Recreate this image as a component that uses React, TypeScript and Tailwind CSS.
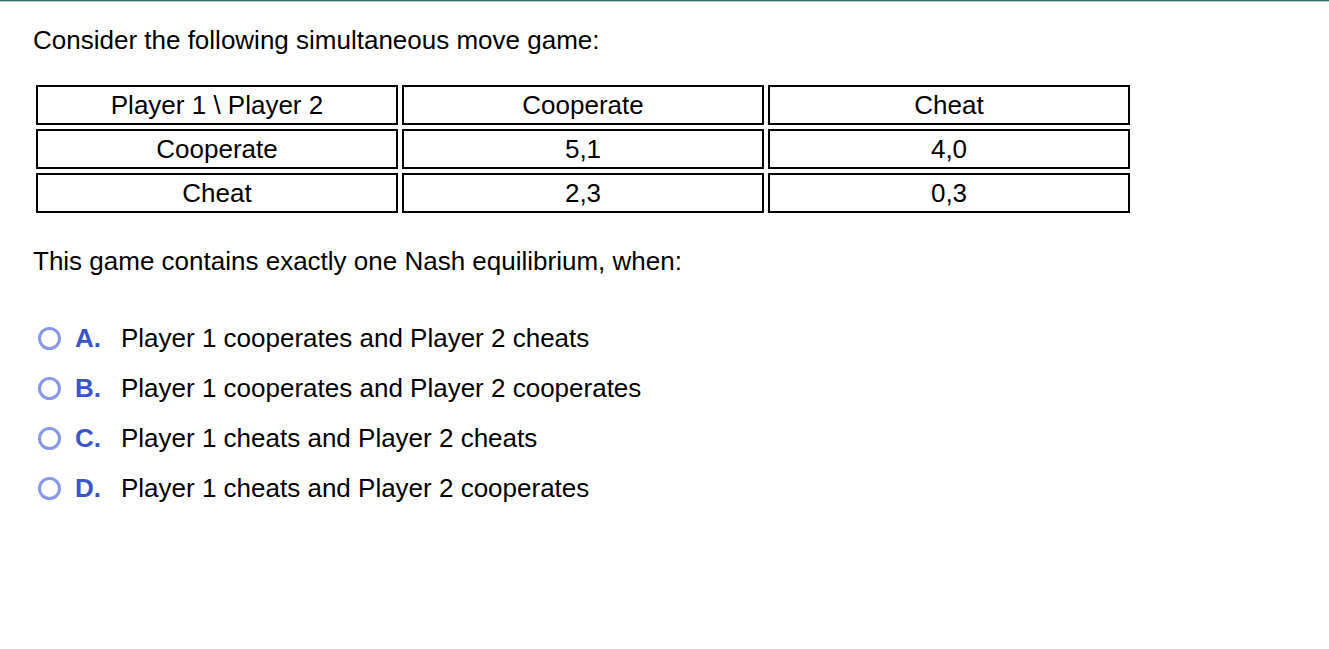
import React from "react";

const rows = [
  ["Player 1 \\ Player 2", "Cooperate", "Cheat"],
  ["Cooperate", "5,1", "4,0"],
  ["Cheat", "2,3", "0,3"],
];

const options = [
  ["A.", "Player 1 cooperates and Player 2 cheats"],
  ["B.", "Player 1 cooperates and Player 2 cooperates"],
  ["C.", "Player 1 cheats and Player 2 cheats"],
  ["D.", "Player 1 cheats and Player 2 cooperates"],
];

export default function App() {
  return (
    <div
      className="w-[1329px] h-[649px] bg-white text-black overflow-hidden"
      style={{ fontFamily: '"Liberation Sans", Arial, sans-serif' }}
    >
      <div className="h-px bg-[#2f6b6d]" />
      <div className="h-px bg-[#b9cccc]" />
      <div className="pl-[33px]">
        <div className="mt-[23px] text-[26px] leading-[30px]">
          Consider the following simultaneous move game:
        </div>
        <div className="mt-[30px] ml-[3px] w-[1094px] grid grid-cols-3 gap-x-[4px] gap-y-[4px]">
          {rows.flat().map((t, i) => (
            <div
              key={i}
              className="h-[40px] border-2 border-black flex items-center justify-center text-[26px] leading-[30px]"
            >
              {t}
            </div>
          ))}
        </div>
        <div className="mt-[33px] text-[26px] leading-[30px]">
          This game contains exactly one Nash equilibrium, when:
        </div>
        <div className="mt-[37px] flex flex-col">
          {options.map(([l, t]) => (
            <div key={l} className="h-[50px] flex items-center">
              <div className="ml-[5px] w-[23px] h-[23px] rounded-full border-[3px] border-[#8898e2] shrink-0" />
              <div className="ml-[14px] w-[46px] text-[26px] leading-[30px] font-bold text-[#3b55c6]">
                {l}
              </div>
              <div className="text-[26px] leading-[30px]">{t}</div>
            </div>
          ))}
        </div>
      </div>
    </div>
  );
}
